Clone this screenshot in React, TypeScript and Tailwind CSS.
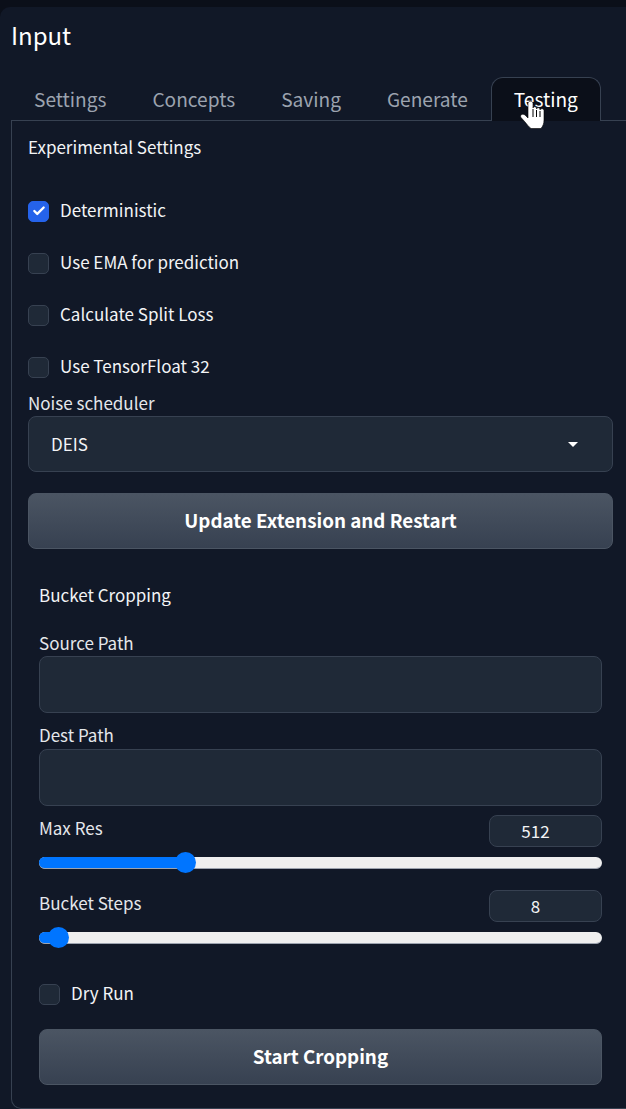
import { Check } from 'lucide-react'

const TABS = ['Settings', 'Concepts', 'Saving', 'Generate']
const FONT = "font-['Noto_Sans_CJK_SC','Noto_Sans',sans-serif]"

function CheckRow({ label, checked = false, className = '' }: { label: string; checked?: boolean; className?: string }) {
  return (
    <div className={`flex items-center h-[22px] ${className}`}>
      <div
        className={`flex items-center justify-center w-[21px] h-[21px] rounded-[5px] border ${
          checked ? 'bg-[#2563eb] border-[#2563eb]' : 'bg-[#1f2937] border-[#374151]'
        }`}
      >
        {checked && <Check size={14} strokeWidth={4} color="#ffffff" />}
      </div>
      <span className="ml-[11px] pb-[2px] text-[17px] leading-[20px] text-[#f3f4f6]">{label}</span>
    </div>
  )
}

function TextBox({ label, labelClass, className = '' }: { label: string; labelClass: string; className?: string }) {
  return (
    <div className={className}>
      <div className={`h-[24px] text-[17px] text-[#e5e7eb] ${labelClass}`}>{label}</div>
      <div className="h-[57px] rounded-[8px] border border-[#374151] bg-[#1f2937]" />
    </div>
  )
}

function Slider({ label, value, pct, className = '' }: { label: string; value: string; pct: number; className?: string }) {
  return (
    <div className={className}>
      <div className="flex justify-between h-[32px]">
        <span className="text-[17px] leading-[26px] text-[#e5e7eb]">{label}</span>
        <div className="flex items-center justify-center pr-[20px] w-[113px] rounded-[8px] border border-[#374151] bg-[#1f2937] text-[17px] text-[#f3f4f6]">
          {value}
        </div>
      </div>
      <div className="relative mt-[10px] h-[12px] rounded-full bg-[#efefef] border-b border-[#9ca3af]">
        <div className="h-[11px] rounded-l-full bg-[#0075ff]" style={{ width: `${pct}%` }} />
        <div
          className="absolute top-[-5px] w-[21px] h-[21px] -ml-[10px] rounded-full bg-[#0075ff]"
          style={{ left: `${pct}%` }}
        />
      </div>
    </div>
  )
}

function BigButton({ label, className = '' }: { label: string; className?: string }) {
  return (
    <button className={`block w-full h-[56px] pb-[2px] rounded-[8px] border border-[#4b5563] bg-gradient-to-b from-[#4b5563] to-[#374151] text-[18.8px] font-semibold text-white ${className}`}>
      {label}
    </button>
  )
}

export default function App() {
  return (
    <div className={`h-[1109px] w-[626px] overflow-hidden bg-[#0b0f19] pt-[7px] ${FONT}`}>
      <div className="relative h-[1102px] rounded-tl-[10px] bg-[#111827] pl-[11px]">
        <div className="pt-[11px] h-[70px] text-[24px] leading-[34px] text-white">Input</div>

        {/* Tabs */}
        <div className="flex h-[44px] text-[19.12px] text-[#9ca3af]">
          {TABS.map(t => (
            <div key={t} className="px-[23px] pt-[6px] leading-[32px]">{t}</div>
          ))}
          <div className="relative z-10 h-[44px] rounded-t-[12px] border border-b-0 border-[#374151] bg-[#0b0f19] px-[22px] pt-[5px] leading-[32px] text-white">
            Testing
          </div>
        </div>

        {/* Tab content */}
        <div className="-mt-px h-[989px] rounded-bl-[10px] border border-r-0 border-[#374151] pl-[16px] pr-[13px]">
          <div className="pt-[14px] h-[79px] text-[17px] leading-[24px] text-[#f3f4f6]">Experimental Settings</div>
          <div className="flex flex-col gap-[30px]">
            <CheckRow label="Deterministic" checked />
            <CheckRow label="Use EMA for prediction" />
            <CheckRow label="Calculate Split Loss" />
            <CheckRow label="Use TensorFloat 32" />
          </div>
          <div className="mt-[13px] h-[25px] text-[17px] leading-[24px] text-[#e5e7eb]">Noise scheduler</div>
          <div className="flex h-[56px] items-center justify-between rounded-[8px] border border-[#374151] bg-[#1f2937] pl-[22px] pr-[34px] text-[17px] text-[#f3f4f6]">
            <span>DEIS</span>
            <div className="h-0 w-0 border-x-[5px] border-t-[5px] border-x-transparent border-t-white" />
          </div>
          <BigButton label="Update Extension and Restart" className="mt-[21px]" />

          {/* Bucket cropping */}
          <div className="px-[11px]">
            <div className="mt-[35px] h-[24px] text-[17px] leading-[22px] text-[#f3f4f6]">Bucket Cropping</div>
            <TextBox label="Source Path" labelClass="leading-[22px]" className="mt-[24px]" />
            <TextBox label="Dest Path" labelClass="leading-[20px]" className="mt-[12px]" />
            <Slider label="Max Res" value="512" pct={26} className="mt-[9px]" />
            <Slider label="Bucket Steps" value="8" pct={3.4} className="mt-[21px]" />
            <CheckRow label="Dry Run" className="mt-[39px]" />
            <BigButton label="Start Cropping" className="mt-[24px]" />
          </div>
        </div>

        {/* Mouse pointer from the capture */}
        <svg className="absolute left-[520px] top-[93px] z-20" width="26" height="29" viewBox="0 0 26 29">
          <path
            d="M8 3.500c0-3 5-3 5 0V8c0-1.800 3.500-1.800 3.500 0v1c0-1.800 3.500-1.800 3.500 0v1c0-1.800 4-1.800 4 .5V20c0 3.500-1 6-3 8.500H11C9 27 7 24.500 5 22L1 17.500C-.5 15 2.500 13 5 15L8 18Z"
            fill="#ffffff"
            stroke="#000000"
            strokeWidth="0.6"
          />
          <path d="M13 9v8M16.500 10v7M20 11v6" stroke="#000000" strokeWidth="1" />
        </svg>
      </div>
    </div>
  )
}
